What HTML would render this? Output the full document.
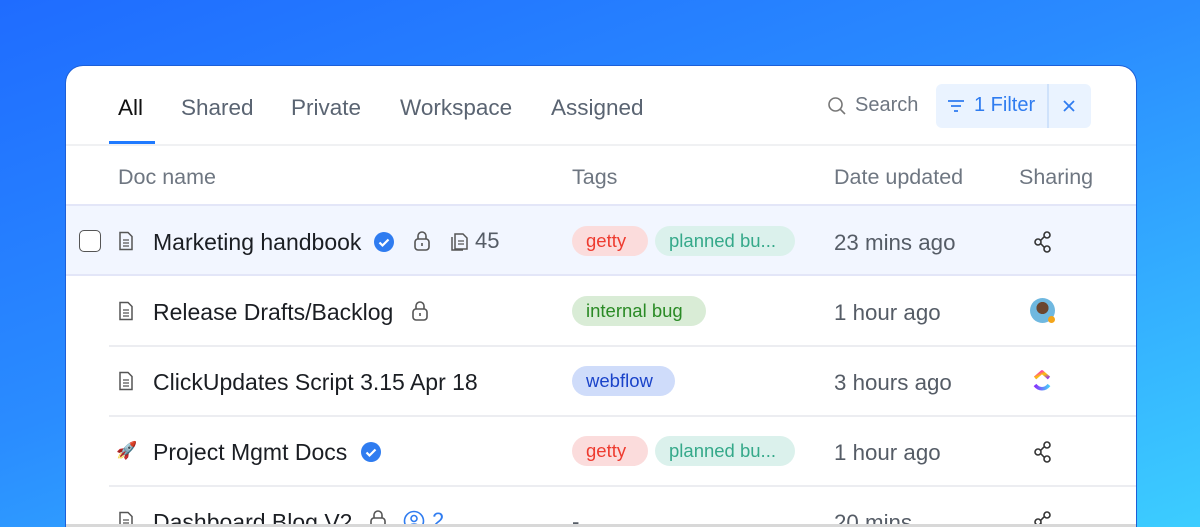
<!DOCTYPE html>
<html><head><meta charset="utf-8"><style>
*{margin:0;padding:0;box-sizing:border-box}
html,body{width:1200px;height:527px;overflow:hidden}
body{font-family:"Liberation Sans",sans-serif;background:linear-gradient(160deg,#1f6cff 0%,#2a8cff 45%,#3ccdff 100%);position:relative}
.card{position:absolute;left:65px;top:65px;width:1072px;height:462px;background:#fff;border-radius:18px 18px 0 0;border:1.5px solid #1c5fd8;border-bottom:none;overflow:hidden}
.abs{position:absolute;white-space:nowrap}
.tab{font-size:22.5px;color:#5a6472;top:29px}
.hdr{font-size:21.5px;color:#6e7681;top:99px}
.name{font-size:23px;color:#1b1e23}
.date{font-size:22.3px;color:#555c66}
.tag{position:absolute;height:30px;border-radius:15px;font-size:18.5px;line-height:30px;padding:0 14px;overflow:hidden}
.g{background:#fbdcdc;color:#ee3b2f;width:76px}
.p{background:#dbf1ec;color:#35a98a;width:140px}
.line{position:absolute;left:43px;right:0;height:2px;background:#ecedf1}
svg{position:absolute}
</style></head><body>
<div class="card">
<div class="abs tab" style="left:52px;color:#111">All</div>
<div class="abs tab" style="left:115px">Shared</div>
<div class="abs tab" style="left:225px">Private</div>
<div class="abs tab" style="left:334px">Workspace</div>
<div class="abs tab" style="left:485px">Assigned</div>
<div style="position:absolute;left:43px;top:75px;width:46px;height:4px;background:#1f7aff"></div>
<div style="position:absolute;left:0;right:0;top:78px;height:2px;background:#f0f1f3"></div>
<svg style="left:761px;top:30px" width="20" height="20" viewBox="0 0 20 20"><circle cx="8.5" cy="8.5" r="6.5" fill="none" stroke="#777" stroke-width="1.6"/><path d="M13.3 13.3L18 18" stroke="#777" stroke-width="1.6"/></svg>
<div class="abs" style="left:789px;top:28px;font-size:20px;color:#6e7681">Search</div>
<div style="position:absolute;left:870px;top:18px;width:155px;height:44px;background:#eaf3ff;border-radius:6px"></div>
<div style="position:absolute;left:981px;top:18px;width:2px;height:44px;background:#cfe2fb"></div>
<svg style="left:880px;top:32px" width="20" height="16" viewBox="0 0 20 16"><path d="M2 3h16M5 8h10M8 13h4" stroke="#2f7cf0" stroke-width="1.8"/></svg>
<div class="abs" style="left:908px;top:28px;font-size:20px;color:#2f7cf0">1 Filter</div>
<svg style="left:996px;top:33px" width="14" height="14" viewBox="0 0 14 14"><path d="M2 2l10 10M12 2L2 12" stroke="#2f7cf0" stroke-width="1.8"/></svg>
<div class="abs hdr" style="left:52px">Doc name</div>
<div class="abs hdr" style="left:506px">Tags</div>
<div class="abs hdr" style="left:768px">Date updated</div>
<div class="abs hdr" style="left:953px">Sharing</div>
<!-- row1 -->
<div style="position:absolute;left:0;right:0;top:138px;height:72px;background:#f2f6ff;border-top:2px solid #e3e6f8;border-bottom:2px solid #e3e6f8"></div>
<div style="position:absolute;left:13px;top:164px;width:22px;height:22px;border:1.6px solid #555;border-radius:5px;background:#fff"></div>
<svg style="left:52px;top:165px" width="16" height="20" viewBox="0 0 16 20"><path d="M2 1.5h8l4 4v13H2z" fill="none" stroke="#555" stroke-width="1.5"/><path d="M5 9h6M5 12h6M5 15h6" stroke="#555" stroke-width="1.3"/></svg>
<div class="abs name" style="left:87px;top:163px">Marketing handbook</div>
<svg style="left:307px;top:165px" width="22" height="22" viewBox="0 0 22 22"><circle cx="11" cy="11" r="10" fill="#2f7cf0"/><path d="M6.5 11.5l3 3 6-6" stroke="#fff" stroke-width="2.2" fill="none"/></svg>
<svg style="left:347px;top:164px" width="18" height="22" viewBox="0 0 18 22"><rect x="2" y="9" width="14" height="11" rx="3" fill="none" stroke="#555" stroke-width="1.6"/><path d="M5 9V6a4 4 0 0 1 8 0v3" fill="none" stroke="#555" stroke-width="1.6"/><path d="M9 13v3" stroke="#555" stroke-width="1.6"/></svg>
<svg style="left:383px;top:164px" width="20" height="22" viewBox="0 0 20 22"><path d="M6 4h8l4 4v11H6z" fill="none" stroke="#555" stroke-width="1.5"/><path d="M3 7v13h11" fill="none" stroke="#555" stroke-width="1.5"/><path d="M9 11h6M9 14h6" stroke="#555" stroke-width="1.3"/></svg>
<div class="abs" style="left:409px;top:162px;font-size:22px;color:#555c66">45</div>
<div class="tag g" style="left:506px;top:160px">getty</div>
<div class="tag p" style="left:589px;top:160px">planned bu...</div>
<div class="abs date" style="left:768px;top:164px">23 mins ago</div>
<svg style="left:967px;top:164px" width="20" height="24" viewBox="0 0 20 24"><circle cx="14" cy="5" r="3" fill="none" stroke="#333" stroke-width="1.6"/><circle cx="5" cy="12" r="3" fill="none" stroke="#333" stroke-width="1.6"/><circle cx="14" cy="19" r="3" fill="none" stroke="#333" stroke-width="1.6"/><path d="M7.6 10.5l3.8-4M7.6 13.5l3.8 4" stroke="#333" stroke-width="1.6"/></svg>
<!-- row2 -->
<svg style="left:52px;top:235px" width="16" height="20" viewBox="0 0 16 20"><path d="M2 1.5h8l4 4v13H2z" fill="none" stroke="#555" stroke-width="1.5"/><path d="M5 9h6M5 12h6M5 15h6" stroke="#555" stroke-width="1.3"/></svg>
<div class="abs name" style="left:87px;top:233px">Release Drafts/Backlog</div>
<svg style="left:345px;top:234px" width="18" height="22" viewBox="0 0 18 22"><rect x="2" y="9" width="14" height="11" rx="3" fill="none" stroke="#555" stroke-width="1.6"/><path d="M5 9V6a4 4 0 0 1 8 0v3" fill="none" stroke="#555" stroke-width="1.6"/><path d="M9 13v3" stroke="#555" stroke-width="1.6"/></svg>
<div class="tag" style="left:506px;top:230px;width:134px;background:#d9ecd6;color:#2a8a25">internal bug</div>
<div class="abs date" style="left:768px;top:234px">1 hour ago</div>
<div style="position:absolute;left:964px;top:232px;width:25px;height:25px;border-radius:50%;background:radial-gradient(circle at 50% 40%,#6b4630 0 30%,#6fb8e0 32%)"></div>
<div style="position:absolute;left:982px;top:250px;width:7px;height:7px;border-radius:50%;background:#f3a51a"></div>
<div class="line" style="top:279px"></div>
<!-- row3 -->
<svg style="left:52px;top:305px" width="16" height="20" viewBox="0 0 16 20"><path d="M2 1.5h8l4 4v13H2z" fill="none" stroke="#555" stroke-width="1.5"/><path d="M5 9h6M5 12h6M5 15h6" stroke="#555" stroke-width="1.3"/></svg>
<div class="abs name" style="left:87px;top:303px">ClickUpdates Script 3.15 Apr 18</div>
<div class="tag" style="left:506px;top:300px;width:103px;background:#cfdcfa;color:#1a43c9">webflow</div>
<div class="abs date" style="left:768px;top:304px">3 hours ago</div>
<svg style="left:965px;top:302px" width="22" height="26" viewBox="0 0 22 26"><defs><linearGradient id="cu" x1="0" y1="0" x2="1" y2="1"><stop offset="0" stop-color="#ff02f0"/><stop offset=".5" stop-color="#ffc800"/><stop offset="1" stop-color="#8930fd"/></linearGradient><linearGradient id="cu2" x1="0" y1="0" x2="1" y2="0"><stop offset="0" stop-color="#8930fd"/><stop offset="1" stop-color="#49ccf9"/></linearGradient></defs><path d="M4 10l7-6 7 6" fill="none" stroke="url(#cu)" stroke-width="3.5" stroke-linejoin="round"/><path d="M4 17c4 5 10 5 14 0" fill="none" stroke="url(#cu2)" stroke-width="3.5"/></svg>
<div class="line" style="top:349px"></div>
<!-- row4 -->
<div class="abs" style="left:50px;top:375px;font-size:17px">🚀</div>
<div class="abs name" style="left:87px;top:373px">Project Mgmt Docs</div>
<svg style="left:294px;top:375px" width="22" height="22" viewBox="0 0 22 22"><circle cx="11" cy="11" r="10" fill="#2f7cf0"/><path d="M6.5 11.5l3 3 6-6" stroke="#fff" stroke-width="2.2" fill="none"/></svg>
<div class="tag g" style="left:506px;top:370px">getty</div>
<div class="tag p" style="left:589px;top:370px">planned bu...</div>
<div class="abs date" style="left:768px;top:374px">1 hour ago</div>
<svg style="left:967px;top:374px" width="20" height="24" viewBox="0 0 20 24"><circle cx="14" cy="5" r="3" fill="none" stroke="#333" stroke-width="1.6"/><circle cx="5" cy="12" r="3" fill="none" stroke="#333" stroke-width="1.6"/><circle cx="14" cy="19" r="3" fill="none" stroke="#333" stroke-width="1.6"/><path d="M7.6 10.5l3.8-4M7.6 13.5l3.8 4" stroke="#333" stroke-width="1.6"/></svg>
<div class="line" style="top:419px"></div>
<!-- row5 -->
<svg style="left:52px;top:445px" width="16" height="20" viewBox="0 0 16 20"><path d="M2 1.5h8l4 4v13H2z" fill="none" stroke="#555" stroke-width="1.5"/><path d="M5 9h6M5 12h6M5 15h6" stroke="#555" stroke-width="1.3"/></svg>
<div class="abs name" style="left:87px;top:443px">Dashboard Blog V2</div>
<svg style="left:303px;top:443px" width="18" height="22" viewBox="0 0 18 22"><rect x="2" y="9" width="14" height="11" rx="3" fill="none" stroke="#555" stroke-width="1.6"/><path d="M5 9V6a4 4 0 0 1 8 0v3" fill="none" stroke="#555" stroke-width="1.6"/></svg>
<svg style="left:337px;top:444px" width="22" height="22" viewBox="0 0 22 22"><circle cx="11" cy="11" r="9.5" fill="none" stroke="#2f7cf0" stroke-width="1.6"/><circle cx="11" cy="8.5" r="3" fill="none" stroke="#2f7cf0" stroke-width="1.6"/><path d="M5.5 17c2-4 9-4 11 0" fill="none" stroke="#2f7cf0" stroke-width="1.6"/></svg>
<div class="abs" style="left:366px;top:442px;font-size:22px;color:#2f7cf0">2</div>
<div class="abs date" style="left:506px;top:443px">-</div>
<div class="abs date" style="left:768px;top:444px">20 mins</div>
<svg style="left:967px;top:444px" width="20" height="24" viewBox="0 0 20 24"><circle cx="14" cy="5" r="3" fill="none" stroke="#333" stroke-width="1.6"/><circle cx="5" cy="12" r="3" fill="none" stroke="#333" stroke-width="1.6"/><circle cx="14" cy="19" r="3" fill="none" stroke="#333" stroke-width="1.6"/><path d="M7.6 10.5l3.8-4M7.6 13.5l3.8 4" stroke="#333" stroke-width="1.6"/></svg>
<div style="position:absolute;left:0;right:0;top:458px;height:4px;background:#d8d8d8"></div>
</div>
</body></html>
